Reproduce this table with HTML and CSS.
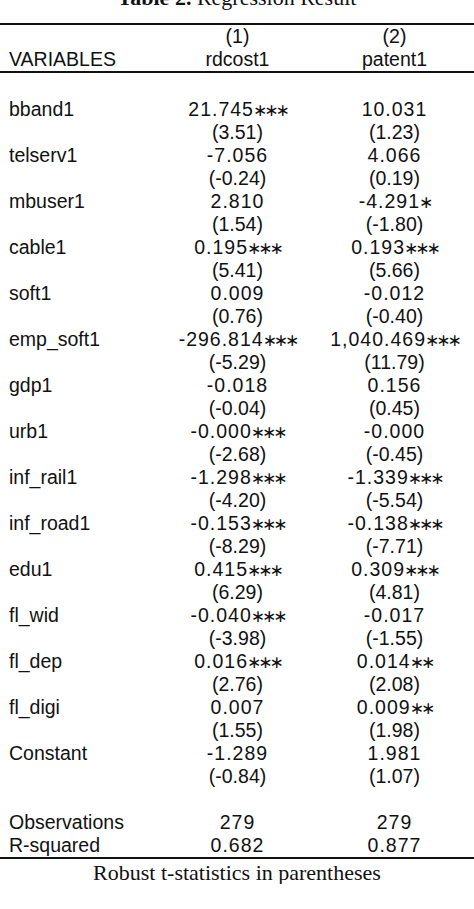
FILE: index.html
```html
<!DOCTYPE html>
<html>
<head>
<meta charset="utf-8">
<link rel="stylesheet" href="styles.css">
</head>
<body>
<div class="title"><b>Table 2.</b> Regression Result</div>
<table class="reg">
  <colgroup><col class="c0"><col class="c1"><col class="c2"></colgroup>
  <thead>
    <tr class="t"><td></td><td>(1)</td><td>(2)</td></tr>
    <tr class="hrule t"><td>VARIABLES</td><td>rdcost1</td><td>patent1</td></tr>
  </thead>
  <tbody>
    <tr class="spacer"><td></td><td></td><td></td></tr>
    <tr><td>bband1</td><td>21.745<span class="st">∗∗∗</span></td><td>10.031</td></tr>
    <tr class="t"><td></td><td>(3.51)</td><td>(1.23)</td></tr>
    <tr><td>telserv1</td><td>-7.056</td><td>4.066</td></tr>
    <tr class="t"><td></td><td>(-0.24)</td><td>(0.19)</td></tr>
    <tr><td>mbuser1</td><td>2.810</td><td>-4.291<span class="st">∗</span></td></tr>
    <tr class="t"><td></td><td>(1.54)</td><td>(-1.80)</td></tr>
    <tr><td>cable1</td><td>0.195<span class="st">∗∗∗</span></td><td>0.193<span class="st">∗∗∗</span></td></tr>
    <tr class="t"><td></td><td>(5.41)</td><td>(5.66)</td></tr>
    <tr><td>soft1</td><td>0.009</td><td>-0.012</td></tr>
    <tr class="t"><td></td><td>(0.76)</td><td>(-0.40)</td></tr>
    <tr><td>emp_soft1</td><td>-296.814<span class="st">∗∗∗</span></td><td>1,040.469<span class="st">∗∗∗</span></td></tr>
    <tr class="t"><td></td><td>(-5.29)</td><td>(11.79)</td></tr>
    <tr><td>gdp1</td><td>-0.018</td><td>0.156</td></tr>
    <tr class="t"><td></td><td>(-0.04)</td><td>(0.45)</td></tr>
    <tr><td>urb1</td><td>-0.000<span class="st">∗∗∗</span></td><td>-0.000</td></tr>
    <tr class="t"><td></td><td>(-2.68)</td><td>(-0.45)</td></tr>
    <tr><td>inf_rail1</td><td>-1.298<span class="st">∗∗∗</span></td><td>-1.339<span class="st">∗∗∗</span></td></tr>
    <tr class="t"><td></td><td>(-4.20)</td><td>(-5.54)</td></tr>
    <tr><td>inf_road1</td><td>-0.153<span class="st">∗∗∗</span></td><td>-0.138<span class="st">∗∗∗</span></td></tr>
    <tr class="t"><td></td><td>(-8.29)</td><td>(-7.71)</td></tr>
    <tr><td>edu1</td><td>0.415<span class="st">∗∗∗</span></td><td>0.309<span class="st">∗∗∗</span></td></tr>
    <tr class="t"><td></td><td>(6.29)</td><td>(4.81)</td></tr>
    <tr><td>fl_wid</td><td>-0.040<span class="st">∗∗∗</span></td><td>-0.017</td></tr>
    <tr class="t"><td></td><td>(-3.98)</td><td>(-1.55)</td></tr>
    <tr><td>fl_dep</td><td>0.016<span class="st">∗∗∗</span></td><td>0.014<span class="st">∗∗</span></td></tr>
    <tr class="t"><td></td><td>(2.76)</td><td>(2.08)</td></tr>
    <tr><td>fl_digi</td><td>0.007</td><td>0.009<span class="st">∗∗</span></td></tr>
    <tr class="t"><td></td><td>(1.55)</td><td>(1.98)</td></tr>
    <tr><td>Constant</td><td>-1.289</td><td>1.981</td></tr>
    <tr class="t"><td></td><td>(-0.84)</td><td>(1.07)</td></tr>
    <tr class="blank"><td></td><td></td><td></td></tr>
    <tr><td>Observations</td><td>279</td><td>279</td></tr>
    <tr class="brule"><td>R-squared</td><td>0.682</td><td>0.877</td></tr>
  </tbody>
</table>
<div class="note">Robust t-statistics in parentheses</div>
</body>
</html>
```

FILE: styles.css
```css
html, body {
  margin: 0;
  padding: 0;
  background: #fff;
  color: #111;
}
body {
  width: 474px;
  overflow: hidden;
}
.title {
  font-family: "Liberation Serif", "Times New Roman", serif;
  font-size: 22px;
  line-height: 22px;
  height: 22px;
  margin-top: -13px;
  margin-bottom: 14px;
  text-align: center;
  white-space: nowrap;
}
.title b {
  font-weight: bold;
}
.reg {
  width: 474px;
  border-collapse: collapse;
  table-layout: fixed;
  font-family: "Liberation Sans", Arial, sans-serif;
  font-size: 19.5px;
  line-height: 23px;
  border-top: 2px solid #111;
}
.c0 { width: 160px; }
.c1 { width: 155px; }
.c2 { width: 159px; }
.reg td {
  padding: 0;
  height: 23px;
  text-align: center;
  white-space: nowrap;
  vertical-align: top;
}
.reg td + td {
  letter-spacing: 1px;
}
.reg .t td {
  letter-spacing: 0;
}
.reg td:first-child {
  text-align: left;
  padding-left: 9px;
}
.reg .hrule td {
  border-bottom: 2px solid #111;
}
.reg .spacer td {
  height: 25px;
}
.reg .brule td {
  border-bottom: 2px solid #111;
}
.st {
  font-family: "DejaVu Sans", sans-serif;
  font-size: 17px;
  line-height: 0;
  letter-spacing: -3px;
  margin-left: -1px;
}
.note {
  font-family: "Liberation Serif", "Times New Roman", serif;
  font-size: 22px;
  line-height: 22px;
  margin-top: 3px;
  text-align: center;
}
```
